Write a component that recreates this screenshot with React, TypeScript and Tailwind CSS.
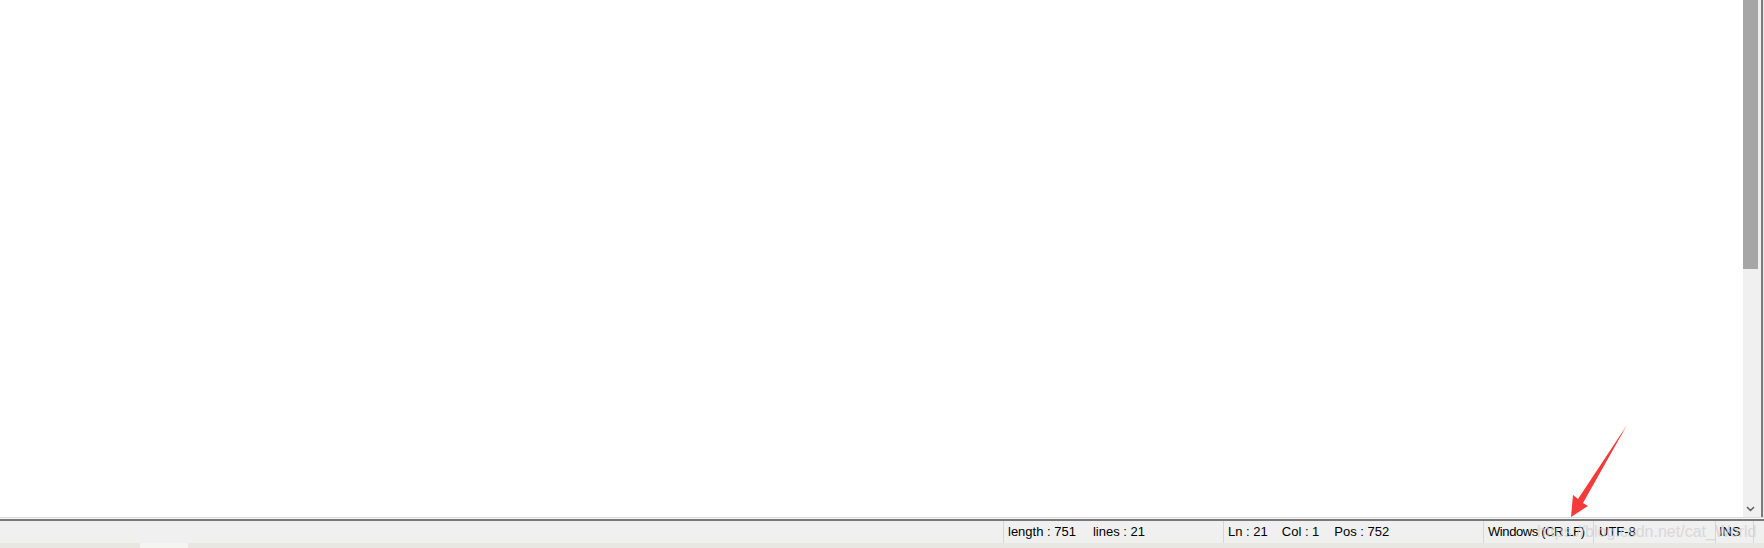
import React from 'react';

export default function App() {
  return (
    <div className="relative w-[1764px] h-[548px] overflow-hidden bg-white flex flex-col font-['Liberation_Sans',Arial,sans-serif] text-[13px] text-black">
      {/* editor + scrollbar */}
      <div className="flex h-[517px] shrink-0">
        <div className="flex-1 bg-white" />
        <div className="w-[17px] bg-[#f0f0f0] flex flex-col">
          <div className="w-[15px] h-[269px] bg-[#a6a6a6]" />
          <div className="flex-1" />
          <div className="h-[17px] w-[15px] flex items-center justify-center">
            <svg width="9" height="6" viewBox="0 0 9 6">
              <path d="M1 1 L4.5 4.5 L8 1" fill="none" stroke="#606060" strokeWidth="1.5" />
            </svg>
          </div>
        </div>
        <div className="w-px bg-[#f0f0f0]" />
        <div className="w-[2px] bg-[#7a7a7a]" />
        <div className="w-px bg-[#e8e8e8]" />
      </div>
      <div className="h-px bg-[#dadada] shrink-0" />
      <div className="h-px bg-[#f7f7f7] shrink-0" />
      <div className="h-[2px] bg-[#787878] shrink-0" />

      {/* status bar */}
      <div className="h-[22px] shrink-0 bg-[#f0f0f0] flex items-stretch leading-[22px] whitespace-nowrap">
        <div className="w-[1003px]" />
        <div className="w-[220px] border-l border-[#d6d6d6] pl-[4px] flex">
          <span>length : 751</span>
          <span className="ml-[17px]">lines : 21</span>
        </div>
        <div className="w-[260px] border-l border-[#d6d6d6] pl-[4px] flex">
          <span>Ln : 21</span>
          <span className="ml-[14px]">Col : 1</span>
          <span className="ml-[15px]">Pos : 752</span>
        </div>
        <div className="w-[110px] border-l border-[#d6d6d6] pl-[4px] tracking-[-0.4px]">Windows (CR LF)</div>
        <div className="w-[122px] border-l border-[#d6d6d6] pl-[5px]">UTF-8</div>
        <div className="w-[38px] border-l border-[#d6d6d6] pl-[3px]">INS</div>
        <div className="flex-1 border-l border-[#d6d6d6]" />
      </div>

      {/* bottom strip */}
      <div className="h-[5px] shrink-0 bg-[#e9e7e1] flex">
        <div className="w-[140px]" />
        <div className="w-[48px] bg-[#f4f4f0]" />
      </div>

      {/* watermark */}
      <div className="absolute left-[1537px] top-[520px] text-[16px] leading-[24px] text-[#cfcfcf] opacity-70 whitespace-nowrap pointer-events-none">
        https://blog.csdn.net/cat_World
      </div>

      {/* red arrow */}
      <svg className="absolute left-0 top-0 pointer-events-none" width="1764" height="548" viewBox="0 0 1764 548">
        <polygon
          points="1571,517 1573,495 1578,499 1627,425 1583,503 1588,506"
          fill="#f53a3a"
        />
      </svg>
    </div>
  );
}
